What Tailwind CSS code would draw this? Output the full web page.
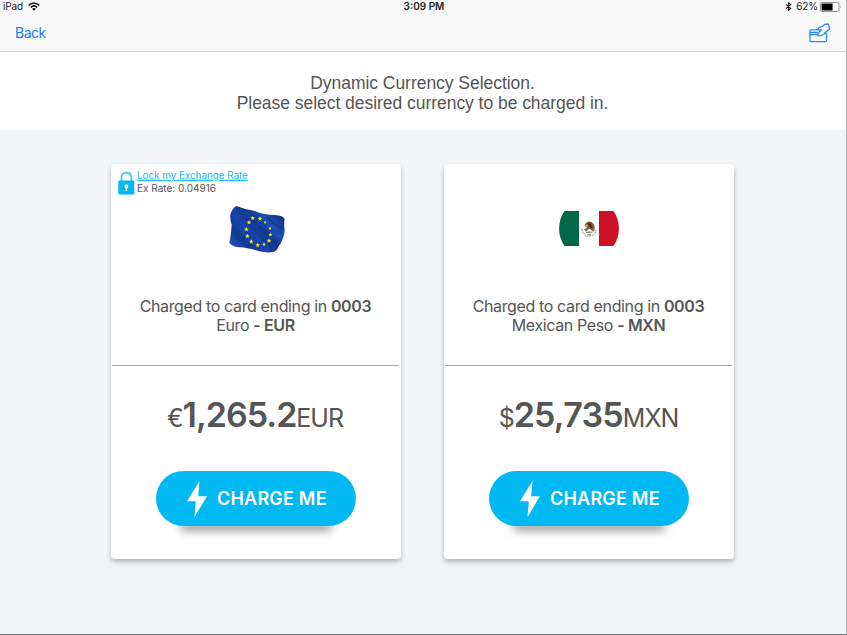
<!DOCTYPE html>
<html lang="en">
<head>
<meta charset="utf-8">
<title>Dynamic Currency Selection</title>
<script src="https://cdn.jsdelivr.net/npm/@tailwindcss/browser@4"></script>
</head>
<body class="h-[635px] w-[847px] overflow-hidden bg-[#f1f5f7] font-['Inter',sans-serif] text-[#555]">
<div class="flex h-[635px] w-[847px] flex-col border-r border-b border-r-[#b4b6b8] border-b-[#77787a]">
  <header class="h-[52px] shrink-0 border-b border-[#d9d9d9] bg-[#f9f9f9]">
    <div class="grid h-[13px] grid-cols-3 items-center pr-[4px] pl-[3px] text-[10px] leading-[13px] text-[#222]">
      <div class="flex items-center gap-[5px]">
        <span class="tracking-[-0.1px]">iPad</span>
        <svg class="h-[9px] w-[12px]" viewBox="0 0 12 9" fill="none" stroke="#111" stroke-width="1.6"><path d="M.7 3.4Q6-1.4 11.3 3.4M2.7 5.4Q6 2.5 9.3 5.4"/><path d="M4.1 6.8Q6 5.2 7.9 6.8L6 8.8Z" fill="#111" stroke="none"/></svg>
      </div>
      <div class="pl-[3px] text-center font-semibold">3:09 PM</div>
      <div class="flex items-center justify-end">
        <svg class="mr-[4px] h-[9px] w-[7px]" viewBox="0 0 6 9" fill="none" stroke="#111" stroke-width="1.1"><path d="M.5 2.4L5.2 6.4L3 8.3V.7L5.2 2.6L.5 6.6"/></svg>
        <span class="mr-[2px] tracking-[-0.15px]">62%</span>
        <svg class="h-[10px] w-[22px]" viewBox="0 0 22 10"><rect x=".5" y=".5" width="18.5" height="9" rx="1.6" fill="#fff" stroke="#888" stroke-width=".9"/><rect x="1.6" y="1.6" width="11" height="6.8" rx=".5" fill="#000"/><path d="M20.2 3.4Q21.6 5 20.2 6.6Z" fill="#888"/></svg>
      </div>
    </div>
    <div class="flex h-[38px] items-center justify-between pr-[15px] pl-[15px]">
      <a class="text-[14px] tracking-[-0.5px] text-[#157efb]">Back</a>
      <svg class="mt-[2px] h-[20px] w-[22px]" viewBox="0 0 22 20" fill="none" stroke="#2b8af8" stroke-width="1.3" stroke-linejoin="round" stroke-linecap="round"><path d="M8.7 6.8H2.2Q1 6.8 1 8V17.4Q1 18.6 2.2 18.6H16.3Q17.5 18.6 17.5 17.4V11"/><path d="M1.2 9.5H8.3M1.2 11.6H8.6M17.3 9.9H16"/><path d="M8.7 11.6Q10 8.5 12.5 6.9L9.1 6.8Q8.6 4.9 10.2 4.4L13.3 3.5L15.6 1.4L19.4 1L20.7 6.3L17.3 8.5L15 11.2Q12.4 13.2 9.3 12.8Z"/></svg>
    </div>
  </header>
  <section class="h-[78px] shrink-0 bg-white pt-[21px] pr-[1px] text-center font-['Liberation_Sans',sans-serif] text-[17.5px] leading-[20px] tracking-[-0.04px]">
    <p>Dynamic Currency Selection.</p>
    <p>Please select desired currency to be charged in.</p>
  </section>
  <main class="flex gap-[43px] pt-[34px] pl-[111px]">
    <article class="flex h-[395px] w-[290px] flex-col rounded-[4px] bg-white shadow-[0_3px_5px_rgba(0,0,0,0.26)]">
      <div class="flex h-[39px] pt-[5px] pl-[7px]">
        <svg class="mt-[2px] mr-[2px] h-[24px] w-[17px]" viewBox="0 0 17 24"><path d="M3.4 11V7Q3.4 1.7 8.4 1.7Q13.4 1.7 13.4 7V11" fill="none" stroke="#35c9f8" stroke-width="1.8"/><rect x=".3" y="9.5" width="16" height="14" rx="1" fill="#00b9f2"/><path d="M8.3 13.2A2 2 0 0 1 9.2 17V20H7.5V17A2 2 0 0 1 8.3 13.2Z" fill="#fff"/></svg>
        <div class="text-[10px] leading-[13px]">
          <a class="block tracking-[-0.1px] text-[#16bcf2] underline">Lock my Exchange Rate</a>
          <div>Ex Rate: 0.04916</div>
        </div>
      </div>
      <div class="flex h-[51px] justify-center">
        <svg class="mt-[1px] ml-[4px] h-[50px] w-[60px]" viewBox="24 18 180 150">
          <defs><linearGradient id="cloth" x1="0" y1="1" x2="1" y2=".25"><stop offset="0" stop-color="#163c9d"/><stop offset=".12" stop-color="#2050b8"/><stop offset=".27" stop-color="#12388f"/><stop offset=".45" stop-color="#1845ac"/><stop offset=".63" stop-color="#12368f"/><stop offset=".76" stop-color="#1c4eb4"/><stop offset="1" stop-color="#12337f"/></linearGradient><path id="star" d="M0-7L2.1-2.5L7-2.1L3.2 1.2L4.4 6L0 3.5L-4.4 6L-3.2 1.2L-7-2.1L-2.1-2.5Z" fill="#f5e51b"/></defs>
          <path d="M49 24Q73 34 105 39Q130 51 165 51Q190 52 194 64Q191 76 194 98Q191 124 176 145Q170 163 153 163Q129 165 108 157Q80 149 60 148Q42 149 28 135Q34 105 35 80Q28 57 32 47Q35 33 49 24Z" fill="url(#cloth)"/>
          <g fill="none" stroke-linecap="round"><path d="M52 30Q95 95 162 157" stroke="#0d2d79" stroke-width="3" opacity=".5"/><path d="M76 38Q125 92 184 119" stroke="#2f65cf" stroke-width="3" opacity=".4"/><path d="M42 66Q67 117 133 158" stroke="#2f65cf" stroke-width="3" opacity=".3"/><path d="M139 53Q160 82 189 91" stroke="#0d2d79" stroke-width="5" opacity=".5"/></g>
          <use href="#star" x="98" y="60"/><use href="#star" x="120" y="62"/><use href="#star" transform="translate(135 73) scale(.65)"/><use href="#star" transform="translate(150 91) scale(.75)"/><use href="#star" transform="translate(151 110) scale(.9)"/><use href="#star" x="147" y="128"/><use href="#star" transform="translate(132 139) scale(.8)"/><use href="#star" x="113" y="141"/><use href="#star" x="94" y="131"/><use href="#star" x="82" y="114"/><use href="#star" x="79" y="94"/><use href="#star" x="87" y="73"/>
        </svg>
      </div>
      <div class="mr-[2px] ml-[1px] h-[112px] border-b border-[#a9a9a9] pt-[43px] text-center text-[16px] leading-[19px] tracking-[-0.37px]">
        <p>Charged to card ending in <b class="font-semibold">0003</b></p>
        <p>Euro <b class="font-semibold">- EUR</b></p>
      </div>
      <div class="flex h-[105px] items-baseline justify-center pt-[29px] pr-[2px] text-[25px] leading-[40px] tracking-[-1px]">
        <span>€</span><strong class="text-[34px] font-semibold">1,265.2</strong><span>EUR</span>
      </div>
      <button class="mx-auto flex h-[55px] w-[200px] items-center rounded-full bg-[#00b9f2] pl-[31px] text-[18px] font-semibold tracking-[0.2px] text-white shadow-[0_28px_10px_-24px_rgba(0,0,0,0.5)]">
        <svg class="mr-[10px] h-[36px] w-[20px]" viewBox="0 0 20 36" fill="#fff"><path d="M12.5 0L0 20.2H8.8L7.5 36L20 15.3H11.2Z"/></svg>
        <span>CHARGE ME</span>
      </button>
    </article>
    <article class="flex h-[395px] w-[290px] flex-col rounded-[4px] bg-white shadow-[0_3px_5px_rgba(0,0,0,0.26)]">
      <div class="flex h-[90px] items-end justify-center pb-[8px]">
        <svg class="h-[35px] w-[60px]" viewBox="0 0 60 35"><path d="M5.5 0H20V35H5.5C-1.7 25-1.7 10 5.5 0Z" fill="#006847"/><path d="M20 0H40V35H20Z" fill="#fff"/><path d="M40 0H54.5C61.7 10 61.7 25 54.5 35H40Z" fill="#ce1126"/>
          <path d="M23 18Q24 25 30 25Q36 25 37.5 18" fill="none" stroke="#9fb58c" stroke-width="1.4" stroke-dasharray="1.5 .7"/><path d="M25.5 15Q26.5 10.5 30 10.5Q34.5 10.5 35.7 16Q36 20 33.7 20.5L30.5 17.5L27 20.5L25 18.5L28.5 16Z" fill="#8a6338"/><path d="M28 12.5L31 11.5L34 16L31.7 18Z" fill="#4d3522"/><path d="M25.8 14.5L29 13.4L27.2 17Z" fill="#c8ad73"/><path d="M27 21.3H33.4" stroke="#58aaa8" stroke-width="1.5"/><path d="M28.5 23.8H31.7" stroke="#ae6c42" stroke-width="1.1"/></svg>
      </div>
      <div class="mr-[2px] ml-[1px] h-[112px] border-b border-[#a9a9a9] pt-[43px] text-center text-[16px] leading-[19px] tracking-[-0.37px]">
        <p>Charged to card ending in <b class="font-semibold">0003</b></p>
        <p>Mexican Peso <b class="font-semibold">- MXN</b></p>
      </div>
      <div class="flex h-[105px] items-baseline justify-center pt-[29px] pr-[1px] text-[25px] leading-[40px] tracking-[-1px]">
        <span>$</span><strong class="text-[34px] font-semibold tracking-[-0.8px]">25,735</strong><span>MXN</span>
      </div>
      <button class="mx-auto flex h-[55px] w-[200px] items-center rounded-full bg-[#00b9f2] pl-[31px] text-[18px] font-semibold tracking-[0.2px] text-white shadow-[0_28px_10px_-24px_rgba(0,0,0,0.5)]">
        <svg class="mr-[10px] h-[36px] w-[20px]" viewBox="0 0 20 36" fill="#fff"><path d="M12.5 0L0 20.2H8.8L7.5 36L20 15.3H11.2Z"/></svg>
        <span>CHARGE ME</span>
      </button>
    </article>
  </main>
</div>
</body>
</html>
